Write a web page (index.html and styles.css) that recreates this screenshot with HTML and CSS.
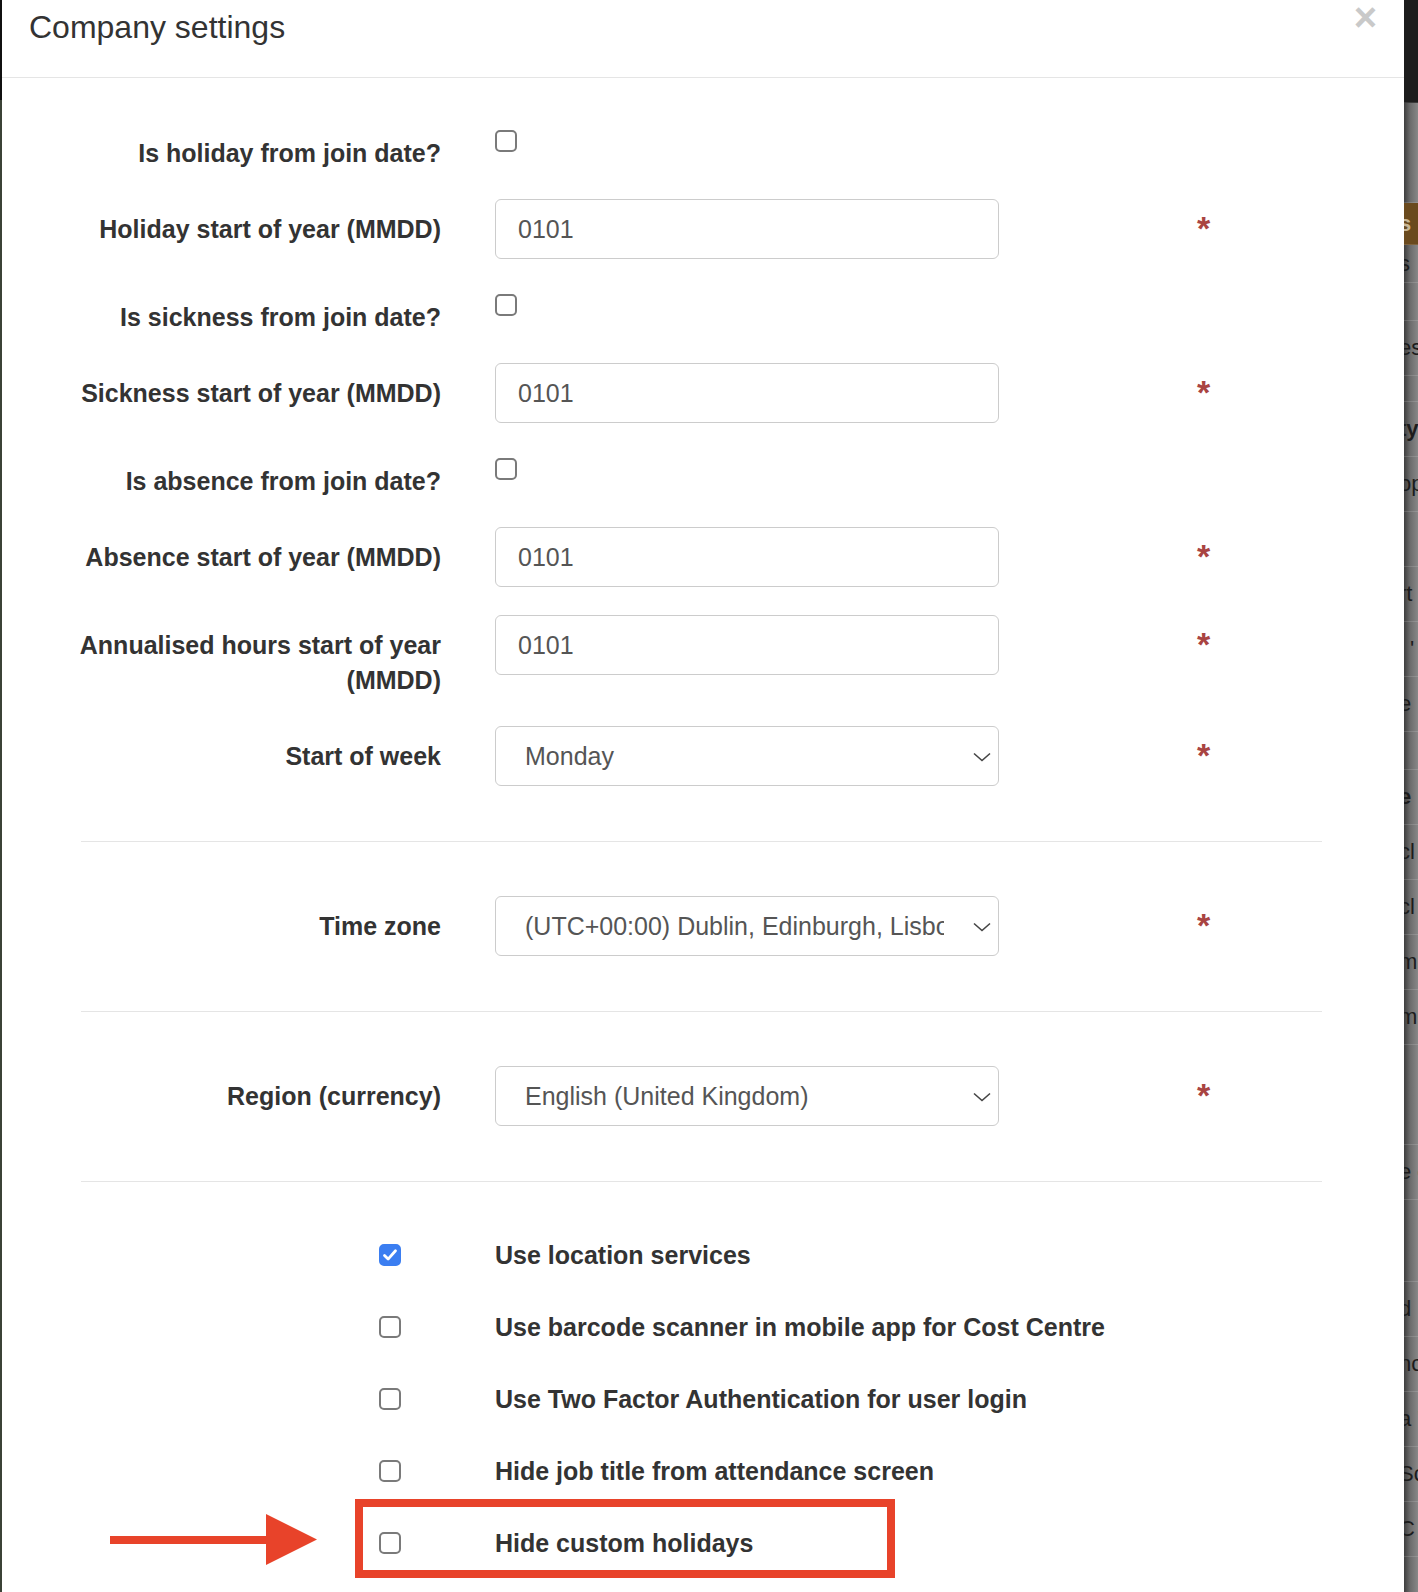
FILE: index.html
```html
<!DOCTYPE html>
<html lang="en">
<head>
    <meta charset="UTF-8">
    <meta name="viewport" content="width=device-width, initial-scale=1.0">
    <title>Company settings</title>
    <link rel="stylesheet" href="styles.css">
</head>
<body>
    <div class="page">
        <div class="backdrop-left"></div>

        <div class="modal">
            <div class="modal-header">
                <h4 class="modal-title">Company settings</h4>
                <button type="button" class="close">×</button>
            </div>

            <div class="modal-body">
                <div class="form-group">
                    <label>Is holiday from join date?</label>
                    <div class="field"><span class="cb"></span></div>
                </div>
                <div class="form-group">
                    <label>Holiday start of year (MMDD)</label>
                    <div class="field"><input type="text" class="form-control" value="0101"></div>
                    <span class="required">*</span>
                </div>
                <div class="form-group">
                    <label>Is sickness from join date?</label>
                    <div class="field"><span class="cb"></span></div>
                </div>
                <div class="form-group">
                    <label>Sickness start of year (MMDD)</label>
                    <div class="field"><input type="text" class="form-control" value="0101"></div>
                    <span class="required">*</span>
                </div>
                <div class="form-group">
                    <label>Is absence from join date?</label>
                    <div class="field"><span class="cb"></span></div>
                </div>
                <div class="form-group">
                    <label>Absence start of year (MMDD)</label>
                    <div class="field"><input type="text" class="form-control" value="0101"></div>
                    <span class="required">*</span>
                </div>
                <div class="form-group">
                    <label>Annualised hours start of year (MMDD)</label>
                    <div class="field"><input type="text" class="form-control" value="0101"></div>
                    <span class="required">*</span>
                </div>
                <div class="form-group">
                    <label>Start of week</label>
                    <div class="field select-wrap">
                        <select class="form-control select"><option>Monday</option></select>
                        <svg class="chevron" width="18" height="10" viewBox="0 0 18 10"><path d="M1 1.5l8 7 8-7" fill="none" stroke="#444" stroke-width="1.6"/></svg>
                    </div>
                    <span class="required">*</span>
                </div>

                <hr class="divider">

                <div class="form-group">
                    <label>Time zone</label>
                    <div class="field select-wrap">
                        <select class="form-control select"><option>(UTC+00:00) Dublin, Edinburgh, Lisbon, London</option></select>
                        <svg class="chevron" width="18" height="10" viewBox="0 0 18 10"><path d="M1 1.5l8 7 8-7" fill="none" stroke="#444" stroke-width="1.6"/></svg>
                    </div>
                    <span class="required">*</span>
                </div>

                <hr class="divider">

                <div class="form-group">
                    <label>Region (currency)</label>
                    <div class="field select-wrap">
                        <select class="form-control select"><option>English (United Kingdom)</option></select>
                        <svg class="chevron" width="18" height="10" viewBox="0 0 18 10"><path d="M1 1.5l8 7 8-7" fill="none" stroke="#444" stroke-width="1.6"/></svg>
                    </div>
                    <span class="required">*</span>
                </div>

                <hr class="divider">

                <div class="check-row">
                    <div class="check-cell">
                        <span class="cb checked">
                            <svg width="18" height="18" viewBox="0 0 18 18"><path d="M3.5 9.5l3.6 3.6 7.4-8.4" fill="none" stroke="#fff" stroke-width="2.8" stroke-linecap="round" stroke-linejoin="round"/></svg>
                        </span>
                    </div>
                    <div class="check-text">Use location services</div>
                </div>
                <div class="check-row">
                    <div class="check-cell"><span class="cb"></span></div>
                    <div class="check-text">Use barcode scanner in mobile app for Cost Centre</div>
                </div>
                <div class="check-row">
                    <div class="check-cell"><span class="cb"></span></div>
                    <div class="check-text">Use Two Factor Authentication for user login</div>
                </div>
                <div class="check-row">
                    <div class="check-cell"><span class="cb"></span></div>
                    <div class="check-text">Hide job title from attendance screen</div>
                </div>
                <div class="check-row">
                    <div class="check-cell"><span class="cb"></span></div>
                    <div class="check-text">Hide custom holidays</div>
                    <!-- annotation -->
                    <svg class="arrow" width="208" height="51" viewBox="0 0 208 51"><rect x="0" y="22" width="160" height="8" fill="#e8432a"/><polygon points="156,0 207,25.5 156,51" fill="#e8432a"/></svg>
                    <div class="highlight"></div>
                </div>
            </div>
        </div>

        <div class="backdrop-right">
            <div class="bg-nav"></div>
            <div class="bg-row l"></div>
            <div class="bg-row brand">s</div>
            <div class="bg-row s">s</div>
            <div class="bg-row s"></div>
            <div class="bg-row m">es</div>
            <div class="bg-row xs"></div>
            <div class="bg-row m bold">ty</div>
            <div class="bg-row m">op</div>
            <div class="bg-row m"></div>
            <div class="bg-row m">rt</div>
            <div class="bg-row m">l '</div>
            <div class="bg-row m">e</div>
            <div class="bg-row s"></div>
            <div class="bg-row m bold">e</div>
            <div class="bg-row m">cl</div>
            <div class="bg-row m">cl</div>
            <div class="bg-row m">m</div>
            <div class="bg-row m">m</div>
            <div class="bg-row l"></div>
            <div class="bg-row m">e c</div>
            <div class="bg-row xl"></div>
            <div class="bg-row m">d</div>
            <div class="bg-row m">nc</div>
            <div class="bg-row m">a '</div>
            <div class="bg-row m">Sc</div>
            <div class="bg-row m">C</div>
        </div>
    </div>
</body>
</html>
```

FILE: styles.css
```css
* {
    box-sizing: border-box;
}

html, body {
    margin: 0;
    height: 1592px;
    overflow: hidden;
}

body {
    font-family: "Liberation Sans", Arial, Helvetica, sans-serif;
    color: #333;
    background: #6e6e6e;
}

.page {
    display: flex;
    height: 1592px;
}

/* page behind the modal */
.backdrop-left {
    width: 2px;
    background: linear-gradient(#101010 0, #101010 100px, #3b4236 100px);
}

.backdrop-right {
    width: 14px;
    overflow: hidden;
    display: flex;
    flex-direction: column;
    background: linear-gradient(to right, #3e3e3e, #6c6c6c 45%, #888);
}

.bg-nav {
    height: 103px;
    flex: none;
    background: #1d1d1d;
    border-bottom: 1px solid #3a3a3a;
}

.bg-row {
    flex: none;
    display: flex;
    align-items: center;
    white-space: nowrap;
    font-size: 22px;
    color: #1c1c1c;
    text-indent: -5px;
    border-bottom: 1px solid rgba(255, 255, 255, 0.14);
}

.bg-row.bold { font-weight: bold; }
.bg-row.xs { height: 26px; }
.bg-row.s { height: 38px; }
.bg-row.m { height: 55px; }
.bg-row.l { height: 100px; }
.bg-row.xl { height: 82px; }

.bg-row.brand {
    height: 42px;
    background: #6a4a1e;
    color: #c9b796;
    font-weight: bold;
}

/* modal */
.modal {
    width: 1402px;
    background: #fff;
    position: relative;
}

.modal-header {
    position: relative;
    height: 78px;
    padding: 10px 27px 0;
    border-bottom: 1px solid #e5e5e5;
}

.modal-title {
    margin: 0;
    font-size: 32px;
    font-weight: normal;
    line-height: 35px;
    color: #333;
}

.close {
    position: absolute;
    top: 2px;
    right: 27px;
    padding: 0;
    border: 0;
    background: none;
    font: bold 40px/30px "Liberation Sans", Arial, sans-serif;
    color: #c9c9c9;
}

.modal-body {
    display: flex;
    flex-direction: column;
    padding: 45px 0 0 73px;
}

.form-group {
    display: grid;
    grid-template-columns: 366px 504px auto;
    column-gap: 54px;
    align-items: start;
    margin-bottom: 28px;
}

label {
    text-align: right;
    font-size: 25px;
    font-weight: bold;
    line-height: 35px;
    padding-top: 13px;
}

.form-group .cb {
    margin-top: 7px;
}

.form-control {
    display: block;
    width: 504px;
    height: 60px;
    padding: 0 22px;
    border: 1px solid #ccc;
    border-radius: 6px;
    background: #fff;
    font: 25px "Liberation Sans", Arial, sans-serif;
    color: #555;
    outline: none;
}

.select-wrap {
    position: relative;
}

.select {
    appearance: none;
    -webkit-appearance: none;
    padding: 0 54px 0 29px;
}

.chevron {
    position: absolute;
    right: 8px;
    top: 26px;
    pointer-events: none;
}

.required {
    color: #a94442;
    font-size: 34px;
    font-weight: bold;
    line-height: 34px;
    padding: 12px 0 0 144px;
}

.divider {
    width: 1241px;
    height: 0;
    margin: 27px 0 54px 6px;
    border: 0;
    border-top: 1px solid #e5e5e5;
}

/* checkboxes */
.cb {
    display: flex;
    align-items: center;
    justify-content: center;
    width: 22px;
    height: 22px;
    border: 2px solid #7a7a7a;
    border-radius: 5px;
    background: #fff;
}

.cb.checked {
    background: #3b7ef1;
    border-color: #3b7ef1;
}

.check-row {
    position: relative;
    display: grid;
    grid-template-columns: 366px auto;
    column-gap: 54px;
    align-items: center;
    height: 38px;
    margin-bottom: 34px;
}

.check-cell {
    justify-self: end;
    margin-right: 40px;
}

.check-text {
    font-size: 25px;
    font-weight: bold;
    line-height: 35px;
}

/* red annotation over the last option */
.highlight {
    position: absolute;
    left: 280px;
    top: -25px;
    width: 540px;
    height: 79px;
    border: 8px solid #e8432a;
}

.arrow {
    position: absolute;
    left: 35px;
    top: -10px;
}
```
